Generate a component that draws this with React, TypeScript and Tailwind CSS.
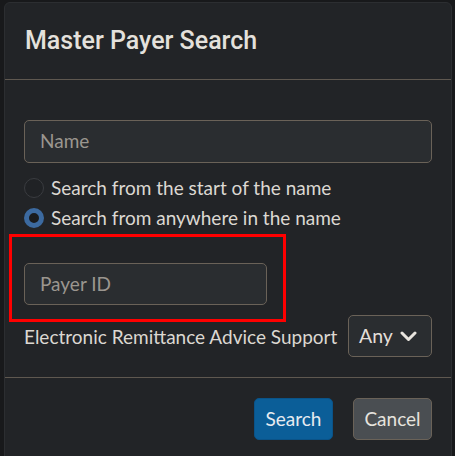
import React from "react";

export default function App() {
  const body = { fontFamily: "Lato, 'Noto Sans', sans-serif" } as React.CSSProperties;
  return (
    <div className="w-[455px] h-[456px] overflow-hidden bg-[#18191b] pt-[2px] pl-[4px] pr-[3px]" style={body}>
      <div className="h-[470px] rounded-[6px] bg-[#222427] border border-[#2c2e31] text-[#dcd8d2]">
        <div className="h-[77px] flex items-center pl-[20px] border-b border-[#5f5850]">
          <h1 className="text-[25px] font-medium text-[#e4e1dc]" style={{ fontFamily: "Roboto, sans-serif" }}>
            Master Payer Search
          </h1>
        </div>
        <div className="px-[19px] pt-[40px] pb-[20px] border-b border-[#5f5850]">
          <div className="h-[43px] rounded-[5px] border border-[#6a6258] bg-[#2a2d30] flex items-center pl-[15px] text-[19px] text-[#9b968f]">
            Name
          </div>
          <div className="mt-[10px] flex flex-col">
            <label className="h-[30px] flex items-center gap-[7px] text-[19px]">
              <span className="w-[20px] h-[20px] rounded-full border border-[#3a3c40] bg-[#202225]" />
              Search from the start of the name
            </label>
            <label className="h-[30px] flex items-center gap-[7px] text-[19px]">
              <span className="w-[20px] h-[20px] rounded-full border-[5px] border-[#3c6aa0] bg-[#1a1b1d]" />
              Search from anywhere in the name
            </label>
          </div>
          <div className="relative pt-[30px]">
            <div className="w-[243px] h-[42px] rounded-[5px] border border-[#6a6258] bg-[#2a2d30] flex items-center pl-[15px] text-[19px] text-[#9b968f]">
              Payer ID
            </div>
            <div className="absolute left-[-15px] top-[1px] w-[277px] h-[88px] border-[3px] border-[#ff0000] pointer-events-none" />
          </div>
          <div className="mt-[10px] flex items-center justify-between">
            <span className="text-[19px] mt-[2px]">Electronic Remittance Advice Support</span>
            <div className="w-[84px] h-[42px] rounded-[5px] border border-[#6a6258] bg-[#2a2d30] flex items-center pl-[10px] gap-[7px] text-[19.5px] text-[#e2ded8]">
              Any
              <svg width="17" height="12" viewBox="0 0 17 12" fill="none">
                <path d="M2 3l6.5 6.5L15 3" stroke="#e8e4de" strokeWidth="3" strokeLinecap="round" strokeLinejoin="round" />
              </svg>
            </div>
          </div>
        </div>
        <div className="flex justify-end gap-[20px] px-[19px] pt-[20px]">
          <button className="w-[79px] h-[42px] rounded-[5px] bg-[#0b5e98] border border-[#0a5388] text-[19px] text-[#e6ebf0]">
            Search
          </button>
          <button className="w-[79px] h-[42px] rounded-[5px] bg-[#4a4e52] border border-[#6a6258] text-[19px] text-[#e6e3de]">
            Cancel
          </button>
        </div>
      </div>
    </div>
  );
}
